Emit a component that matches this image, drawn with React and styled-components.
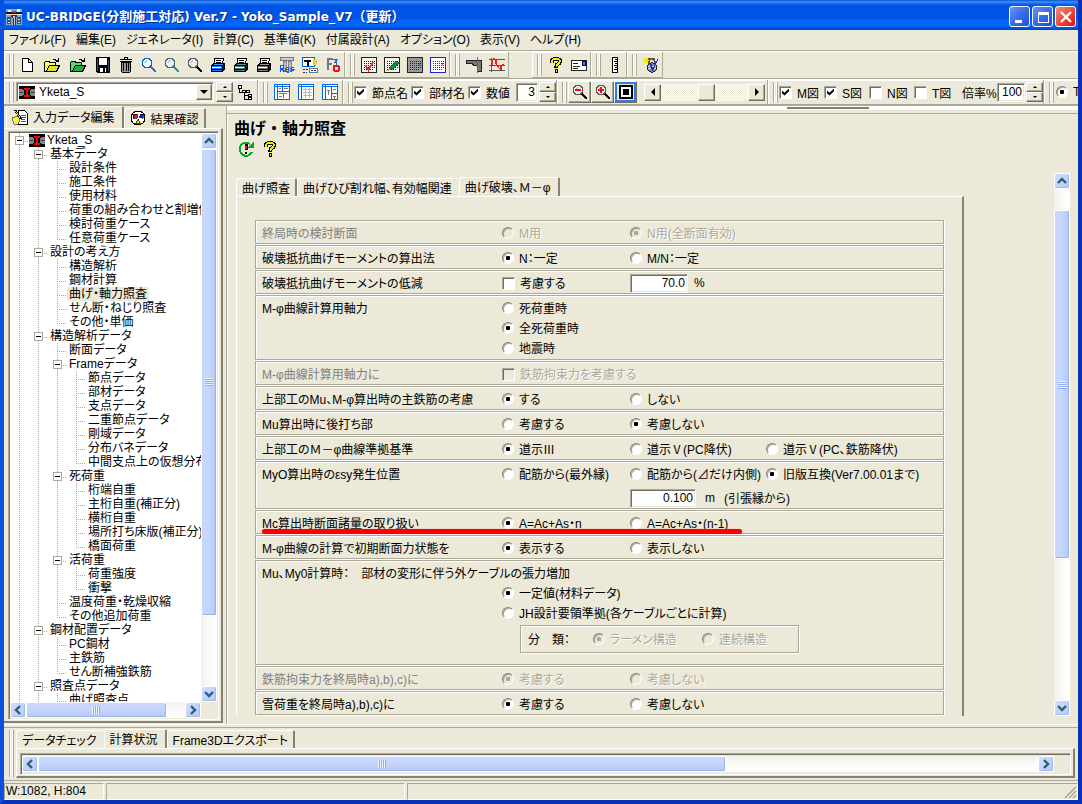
import React from 'react';
import styled, { createGlobalStyle, css } from 'styled-components';

const face = '#ece9d8';
const shade = '#aca899';
const dark = '#716f64';
const edge = '#85826f';

const GlobalStyle = createGlobalStyle`
  *, *::before {
    box-sizing: border-box;
  }
  body {
    margin: 0;
    overflow: hidden;
  }
  body, button, input, select {
    font-family: 'Liberation Sans', 'Noto Sans CJK JP', sans-serif;
    font-size: 12px;
    font-feature-settings: 'palt';
    color: #000;
  }
`;

/* ---------- icons ---------- */

const lens = (ring, handle, glass = '#fff') => (
  <>
    <path d="M9 9l6 6" stroke={handle} strokeWidth="2.4" />
    <circle cx="6" cy="6" r="4.6" fill={glass} stroke={ring} strokeWidth="1.6" />
    <path d="M3 5h1v-1h1v-1h1" fill="none" stroke="#9cf" />
  </>
);

const folder = (fill, front) => (
  <>
    <path d="M.5 14V5.5l1-1H5l1 1h5.500V8.500H5.500L2 14.500z" fill={fill} stroke="#000" />
    <path d="M2 14.5L5.5 8.5H15.5L12.5 14.5z" fill={front} stroke="#000" />
    <path d="M9 2.5h2l1 1h2M14.5 1v4M12 4.5h3" fill="none" stroke="#000" />
  </>
);

const printer = (body, top) => (
  <>
    <path d="M4.5 6V1.5H13.5L12.5 6" fill="#fff" stroke="#000" />
    <path d="M6 3.5h5M6 5.5h5" stroke="#000" />
    <path d="M1.5 8.5L4 6.5H14.5L12.5 8.5z" fill={top} stroke="#000" />
    <path d="M1.5 8.5H12.5V14.5H1.5z" fill={body} stroke="#000" />
    <path d="M12.5 8.5L14.5 6.5V12L12.5 14.5z" fill="#222" stroke="#000" />
    <path d="M2 10.5h9" stroke="#fff" />
    <path d="M2 12.5h10" stroke="#000" />
  </>
);

const gridSheet = (stroke, fill, dots) => (
  <>
    <rect x="0.5" y="0.5" width="15" height="15" rx="1" fill={fill} stroke={stroke} />
    <path
      d="M3 4.500h11M3 6.500h11M3 8.500h11M3 10.500h11M3 12.500h9"
      stroke={dots}
      strokeDasharray="1 1"
    />
  </>
);

const ICONS = {
  app: (
    <>
      <rect width="16" height="16" fill="#7fa6d8" />
      <path d="M0 3h16v2H0z" fill="#111" />
      <path d="M0 5h16v1H0z" fill="#e8e8e8" />
      <path d="M2 1h3v2H2zM11 0h3v3h-3z" fill="#fff" />
      <path d="M5 6h6l-2 3v7H7V9z" fill="#c9c9c9" stroke="#333" />
      <path d="M1 8h4v7H1zM11 8h4v7h-4z" fill="#4a4f60" />
      <path d="M6 2h4v2H6z" fill="#d22" />
      <path d="M2 10h2M12 10h2M2 13h2M12 13h2" stroke="#ddd" />
    </>
  ),
  beam: (
    <>
      <rect width="16" height="13" fill="#000" />
      <path d="M0 3h4l1 2v3l-1 2H0zM16 3h-4l-1 2v3l1 2h4z" fill="#848484" />
      <path d="M0 6.500h4M12 6.500h4" stroke="#444" />
      <path d="M5 2h6v2H9v5h2v2H5V9h2V4H5z" fill="#f00" />
    </>
  ),
  page: <path d="M2.500 1.500h6l4 4v9h-10zM8.500 1.500v4h4" fill="#fff" stroke="#000" />,
  open: folder('#ff6', '#dd3'),
  openGreen: folder('#5d6', '#2a4'),
  save: (
    <>
      <path d="M1 0h14v16H2l-1-1z" fill="#000" />
      <path d="M4 1h8v7H4zM5 11h6v4H5z" fill="#fff" />
      <path d="M8 11h2v4H8z" fill="#000" />
      <path d="M2.500 2v12M13.500 3v11" stroke="#447" />
    </>
  ),
  trash: (
    <>
      <path d="M6.500 2V.5H9.500V2M2 2.500H14M2 4.500H14" fill="none" stroke="#000" />
      <path d="M3.500 5H12.500V14.500L11.500 15.500H4.500L3.500 14.500z" fill="#999" stroke="#000" />
      <path d="M5.500 6v8M8 6v8M10.500 6v8" stroke="#000" />
    </>
  ),
  findBlue: lens('#06c', '#27e'),
  find: lens('#466', '#488', '#eef'),
  findBlack: lens('#555', '#000', '#eee'),
  print: printer('#17f', '#49f'),
  printTeal: printer('#477', '#688'),
  printGray: printer('#777', '#999'),
  res: (
    <>
      <path d="M1.500 .5h13v3h-13z" fill="#ccc" stroke="#777" />
      <path d="M4.500 4h3v9h-3zM9.500 4h3v9h-3z" fill="#bbb" stroke="#888" />
      <path
        d="M1.500 15V8.500H4q2 1.500 0 3H1.500l4 3.500M6.500 12.500h3q0-2-1.500-2T6.500 13q0 2 3 2M15 10.500q-3-.5-3 1t2.500 1-3 2"
        fill="none"
        stroke="#15f"
        strokeWidth="1.300"
      />
    </>
  ),
  layout: (
    <>
      <rect x="0.5" y="0.5" width="12" height="9" fill="#fff" stroke="#06c" />
      <path d="M2 3h7v2H7v4H5V5H2z" fill="#000" />
      <path d="M12 2l3 2-2 5-2-3z" fill="#fd0" stroke="#c90" strokeWidth="0.500" />
      <rect x="7.500" y="11.500" width="8" height="4" fill="#fff" stroke="#777" />
      <path d="M1 12.500h5M1 15h4M9 13.500h5" stroke="#229" strokeDasharray="2 1" />
    </>
  ),
  f3d: (
    <>
      <path d="M3 13V2H8M3 6.500h4" fill="none" stroke="#777" strokeWidth="2" />
      <path d="M8 2.500h4l-2 3q3 0 1 3" fill="none" stroke="#26d" strokeWidth="1.500" />
      <ellipse cx="11.500" cy="11.500" rx="2.800" ry="3" fill="none" stroke="#e11" strokeWidth="2" />
      <path d="M8 8v5" stroke="#e11" />
    </>
  ),
  calcRed: (
    <>
      {gridSheet('#222', '#f6f6f0', '#222')}
      <path d="M5 9l2.500 4L12 5" fill="none" stroke="#e22" strokeWidth="1.800" />
    </>
  ),
  calcGreen: (
    <>
      {gridSheet('#222', '#f6f6f0', '#222')}
      <path d="M6 12l1-3 5-5 3 2-6 6z" fill="#093" stroke="#042" strokeWidth="0.700" />
      <path d="M4 13l2-1" stroke="#f80" strokeWidth="2" />
    </>
  ),
  calcGray: (
    <>
      {gridSheet('#222', '#999', '#222')}
      <path d="M12 6h1v2h-1z" fill="#e22" />
    </>
  ),
  calcBlue: (
    <>
      {gridSheet('#22d', '#fff', '#22d')}
      <path d="M12 6h1v2h-1z" fill="#e22" />
    </>
  ),
  girder: (
    <>
      <path d="M0 3.500h15.500v11h-4V8.500H8L6 6.500H0z" fill="#777" stroke="#222" />
      <path d="M11.500 0v16" stroke="#f22" />
    </>
  ),
  wave: (
    <>
      <path d="M2.500 1v14M0 2.500h16M0 8.500h16M0 13.500h16" stroke="#555" />
      <path d="M3 8V3l2-2 2 2v4l3 4 1 1h1V9l3-2" fill="none" stroke="#e22" strokeWidth="1.200" />
    </>
  ),
  help: (
    <>
      <path d="M4 6V4q0-2 4-2t4 2q0 2-2 3T8.500 11" fill="none" stroke="#000" strokeWidth="4" />
      <path d="M4 5.500V4q0-2 4-2t4 2q0 2-2 3T8.500 10.500" fill="none" stroke="#ee0" strokeWidth="1.800" />
      <circle cx="8.500" cy="14" r="1.500" fill="#ee0" stroke="#000" />
    </>
  ),
  card: (
    <>
      <rect x="0.500" y="3.500" width="15" height="10" fill="#fff" stroke="#222" />
      <path d="M2 6.500h5M2 9.500h7M2 11.500h5" stroke="#222" />
      <path d="M11.500 4.500h3v4h-3z" fill="#48f" stroke="#006" />
    </>
  ),
  ruler: (
    <>
      <path d="M5.500 0.500h5v15h-5z" fill="#fff" stroke="#000" />
      <path d="M8 2.500h2M7 4.500h3M8 6.500h2M7 8.500h3M8 10.500h2M7 12.500h3" stroke="#000" />
    </>
  ),
  lock: (
    <>
      <path d="M5.500 8V4q0-2.500 3-2.500T11.500 4v4" fill="none" stroke="#555" strokeWidth="2" />
      <circle cx="9" cy="10.500" r="4.700" fill="#888" stroke="#222" />
      <path d="M5 9.500h8M5 11.500h8" stroke="#ddd" />
      <path d="M8 7l1.500 6L15 2M8 9l2 5" fill="none" stroke="#12c" strokeWidth="1.300" />
      <path d="M3.500 1v6M0 3.500h6M1 1.500l4 4M5 1.500l-4 4" stroke="#ee0" />
    </>
  ),
  tree: (
    <>
      <path
        d="M1.500 1.500h3v3h-3zM5.500 6.500h3v2h-3zM9.500 6.500h3v2h-3zM11.500 10.500h3v2h-3zM11.500 13.500h3v2h-3z"
        fill="#fff"
        stroke="#000"
      />
      <path d="M2.500 5v3h3M7.500 9v6h4M8 11.500h4" fill="none" stroke="#000" />
    </>
  ),
  pane1: (
    <>
      <path d="M.5 .5h15v15H.5z" fill="#fff" stroke="#06e" />
      <path d="M3.500 1v15M8.500 1v6M3 7.500h13M1 2.500h15" stroke="#06e" />
      <path d="M5 4.500h2M10 4.500h4M5 9.500h8M5 12.500h3M9.500 10v4" stroke="#777" />
    </>
  ),
  pane2: (
    <>
      <path d="M.5 .5h15v15H.5z" fill="#fff" stroke="#06e" />
      <path d="M3.500 1v15M1 2.500h15" stroke="#06e" />
      <path d="M5 5.500h9M5 8.500h9M5 11.500h9M7.500 4v10M11.500 4v10" stroke="#bbb" />
    </>
  ),
  pane3: (
    <>
      <path d="M.5 .5h15v15H.5z" fill="#fff" stroke="#06e" />
      <path d="M3.500 1v15M1 2.500h15M9.500 3v12M10 9.500h5" stroke="#06e" />
      <path d="M5 6.500h3M6.500 7v4M11 5.500h3M11 12.500h3M12.500 12v3" stroke="#777" />
    </>
  ),
  zoomOut: (
    <>
      {lens('#555', '#000', '#eee')}
      <path d="M3 6h6" stroke="#e11" strokeWidth="2" />
    </>
  ),
  zoomIn: (
    <>
      {lens('#555', '#000', '#eee')}
      <path d="M3 6h6M6 3v6" stroke="#e11" strokeWidth="2" />
    </>
  ),
  fit: (
    <>
      <path d="M2 2h12v12H2z" fill="#fff" stroke="#000" strokeWidth="2" />
      <path d="M5 5h6v6H5z" fill="#000" />
    </>
  ),
  edit: (
    <>
      <path d="M6.500 1.500h6l3 3v11h-9z" fill="#fff" stroke="#000" />
      <path d="M9 6.500h5M9 8.500h5M9 10.500h4M9 12.500h5" stroke="#555" />
      <path d="M0 9l5-2 3 3-2 5H2z" fill="#fe4" stroke="#555" strokeWidth="0.800" />
      <path d="M3 1l6 9" stroke="#000" strokeWidth="2.400" />
      <path d="M3.500 2l5 7.500" stroke="#fd0" strokeWidth="1" />
    </>
  ),
  result: (
    <>
      <circle cx="8" cy="8" r="7" fill="#fff" stroke="#000" />
      <path d="M3 4h4v4H3z" fill="#e11" stroke="#000" strokeWidth="0.700" />
      <circle cx="11.500" cy="6" r="2" fill="#22d" stroke="#000" strokeWidth="0.700" />
      <path d="M8 8.500l3 4.500H5z" fill="#fd0" stroke="#000" strokeWidth="0.700" />
    </>
  ),
  refresh: (
    <>
      <path d="M14 11A6.500 6.500 0 1 1 12 3" fill="none" stroke="#0a2" strokeWidth="2" />
      <path d="M15.500 1v6H10z" fill="#0a2" />
      <path d="M8 3v6" stroke="#000" strokeWidth="3" />
      <path d="M8 5v3" stroke="#c22" strokeWidth="2" />
      <path d="M7 11h2v2H7z" fill="#000" />
    </>
  ),
};

const Svg = styled.svg`
  display: block;
  flex: none;
  width: 16px;
  height: ${props => props.$height || 16}px;
`;

const Icon = ({ name, height = 16 }) => (
  <Svg viewBox={`0 0 16 ${height}`} $height={height} shapeRendering="crispEdges" aria-hidden="true">
    {ICONS[name]}
  </Svg>
);

/* ---------- shared parts ---------- */

const raised = css`
  border: 1px solid;
  border-color: #fff ${dark} ${dark} #fff;
  box-shadow: inset -1px -1px 0 ${shade};
`;

const sunken = css`
  padding: 1px;
  border: 1px solid;
  border-color: ${shade} #fff #fff ${shade};
  box-shadow: inset 1px 1px 0 ${dark}, inset -1px -1px 0 ${face};
`;

const Radio = styled.input.attrs({ type: 'radio' })`
  appearance: none;
  flex: none;
  width: 12px;
  height: 12px;
  margin: 0;
  border: 1px solid;
  border-color: #86837a #fff #fff #86837a;
  border-radius: 50%;
  background: #fff;
  box-shadow: inset 1px 1px 0 #aaa79b;

  &:checked {
    background: radial-gradient(circle at 5px 5px, #000 0 2px, #fff 2.500px);
  }
  &:disabled {
    background: ${face};
  }
  &:disabled:checked {
    background: radial-gradient(circle at 5px 5px, #aca899 0 2px, ${face} 2.500px);
  }
`;

const Check = styled.input.attrs({ type: 'checkbox' })`
  appearance: none;
  flex: none;
  display: grid;
  place-items: center;
  width: 13px;
  height: 13px;
  margin: 0;
  border: 1px solid;
  border-color: ${shade} #fff #fff ${shade};
  background: #fff;
  box-shadow: inset 1px 1px 0 ${dark};

  &:checked::before {
    content: '';
    width: 7px;
    height: 7px;
    background: #000;
    clip-path: polygon(0 28%, 36% 60%, 100% 0, 100% 40%, 36% 100%, 0 68%);
  }
  &:disabled {
    background: ${face};
  }
`;

const Option = styled.label`
  grid-column: ${props => props.$col || 'auto'};
  display: flex;
  flex: none;
  align-items: center;
  gap: 5px;
  white-space: nowrap;
  ${props =>
    props.$off &&
    css`
      color: ${shade};
      text-shadow: 1px 1px 0 #fff;
    `}
`;

const NumberField = styled.input.attrs({ type: 'text' })`
  ${sunken}
  width: ${props => props.$width}px;
  height: 19px;
  margin: 0;
  padding: 0 2px 1px;
  background: #fff;
  text-align: right;
  outline: none;
`;

/* XP style scroll bar */
const Bar = styled.div`
  display: flex;
  flex: none;
  flex-direction: ${props => (props.$across ? 'row' : 'column')};
  ${props => (props.$across ? 'height: 16px;' : 'width: 16px;')}
  background: linear-gradient(${props => (props.$across ? '180deg' : '90deg')}, #f2f1ec, #fdfdfa 70%, #fff);
`;

const BarButton = styled.button`
  display: flex;
  flex: none;
  align-items: center;
  justify-content: center;
  width: 16px;
  height: 16px;
  padding: 0;
  border: 1px solid #fff;
  border-radius: 2px;
  background: linear-gradient(135deg, #d0defe, #b4c9f8);
  box-shadow: inset -1px -1px 0 #a4bbec;
`;

const Thumb = styled.div`
  display: flex;
  align-items: center;
  justify-content: center;
  flex: ${props => props.$size} 1 0;
  border: 1px solid #fff;
  border-radius: 2px;
  background: linear-gradient(${props => (props.$across ? '180deg' : '90deg')}, #c8d7fe 40%, #b7cbf8 90%);
  box-shadow: inset -1px -1px 0 #98b4e6;
`;

const Space = styled.div`
  flex: ${props => props.$size} 1 0;
`;

const Grip = styled.span`
  width: 8px;
  height: 8px;
  background: repeating-linear-gradient(
    ${props => (props.$across ? '90deg' : '180deg')},
    #eef4fe 0 1px,
    #8cb0f8 1px 2px
  );
`;

const CHEVRONS = {
  up: 'M4 10l4-4 4 4',
  down: 'M4 6l4 4 4-4',
  left: 'M10 4l-4 4 4 4',
  right: 'M6 4l4 4-4 4',
};

const Chevron = ({ to }) => (
  <Svg viewBox="0 0 16 16" aria-hidden="true">
    <path d={CHEVRONS[to]} fill="none" stroke="#2a6172" strokeWidth="2.400" />
  </Svg>
);

const ScrollBar = ({ across, before = 0, size, after }) => (
  <Bar $across={across}>
    <BarButton tabIndex={-1} aria-label={across ? 'Left' : 'Up'}>
      <Chevron to={across ? 'left' : 'up'} />
    </BarButton>
    <Space $size={before} />
    <Thumb $size={size} $across={across}>
      <Grip $across={across} />
    </Thumb>
    <Space $size={after} />
    <BarButton tabIndex={-1} aria-label={across ? 'Right' : 'Down'}>
      <Chevron to={across ? 'right' : 'down'} />
    </BarButton>
  </Bar>
);

/* ---------- window frame ---------- */

const Window = styled.div`
  display: flex;
  flex-direction: column;
  height: 100vh;
  border: solid #0a4fe0;
  border-width: 0 4px 4px;
  border-color: #0a4fe0 #0831b8 #0831b8 #0a4fe0;
  background: ${face};
  overflow: hidden;
`;

const TitleBar = styled.header`
  display: flex;
  align-items: center;
  flex: none;
  height: 30px;
  margin: 0 -4px;
  padding: 3px 6px 0;
  background: linear-gradient(
    #0a50d0 0,
    #3f94fa 2px,
    #0a62ea 4px,
    #0054e4 6px,
    #0055e6 19px,
    #0066fb 20px,
    #0066fb 26px,
    #0040cc 30px
  );
`;

const Title = styled.h1`
  flex: 1;
  margin: 0 0 0 4px;
  font: bold 12px/20px 'DejaVu Sans', 'Noto Sans CJK JP', sans-serif;
  color: #fff;
  text-shadow: 1px 1px 0 #0a2a80;
  white-space: nowrap;
`;

const TitleKanji = styled.span`
  font-size: 13px;
`;

const CaptionButton = styled.button`
  display: flex;
  align-items: center;
  justify-content: center;
  width: 21px;
  height: 21px;
  margin-left: 2px;
  padding: 0;
  border: 1px solid #fff;
  border-radius: 3px;
  background: ${props =>
    props.$close
      ? 'linear-gradient(135deg, #f0907a, #e8503a 50%, #e01010)'
      : 'linear-gradient(135deg, #6a94f0, #3a6cea 50%, #1a50d8)'};
`;

const MenuBar = styled.nav`
  display: flex;
  flex: none;
  gap: 10px;
  height: 20px;
  padding-left: 5px;
`;

const MenuButton = styled.button`
  padding: 0 0 3px;
  border: 0;
  background: none;
  white-space: nowrap;
`;

const ToolBar = styled.div`
  display: flex;
  flex: none;
  height: ${props => props.$height}px;
  border-top: 1px solid ${shade};
  box-shadow: inset 0 1px 0 #fff;
  overflow: hidden;
`;

const ToolGroup = styled.div`
  display: flex;
  align-items: center;
  flex: none;
  margin: 1px 0 0 ${props => props.$before || 0}px;
  padding-left: 5px;
  border-right: 1px solid ${shade};
  border-bottom: 1px solid ${shade};
  box-shadow: inset 1px 1px 0 #fff;

  &::before {
    content: '';
    align-self: stretch;
    width: 5px;
    margin: 2px ${props => props.$after || 2}px 1px 0;
    border: solid ${shade};
    border-width: 0 1px;
    box-shadow: inset 1px 0 0 #fff, inset -1px 0 0 #fff;
  }
`;

const ToolButton = styled.button`
  display: flex;
  align-items: center;
  justify-content: center;
  flex: none;
  width: ${props => props.$width || 23}px;
  height: 22px;
  padding: 0;
  border: 0;
  background: none;
  ${props => props.$raised && raised}
  ${props => props.$active && 'outline: 2px solid #2a80e8; outline-offset: -3px;'}
`;

const Combo = styled.div`
  ${sunken}
  display: flex;
  align-items: center;
  width: 198px;
  height: 20px;
  padding-left: 2px;
  background: #fff;
`;

const ComboSelect = styled.select`
  appearance: none;
  flex: 1;
  min-width: 0;
  height: 16px;
  padding: 0 0 0 4px;
  border: 0;
  background: none;
  outline: none;
`;

const ComboArrow = styled.span`
  ${raised}
  display: flex;
  align-items: center;
  justify-content: center;
  flex: none;
  width: 16px;
  height: 16px;
  background: ${face};
`;

const Spin = styled.div`
  display: flex;
  flex-direction: column;
  width: 17px;
  margin-left: ${props => props.$before || 1}px;
`;

const SpinButton = styled.button`
  ${raised}
  display: flex;
  align-items: center;
  justify-content: center;
  height: 10px;
  padding: 0;
  background: ${face};
`;

const Arrow = styled.span`
  border: ${props => props.$size || 2}px solid transparent;
  ${props => props.$to === 'up' && 'border-top: 0; border-bottom-color: #000;'}
  ${props => props.$to === 'down' && 'border-bottom: 0; border-top-color: #000;'}
  ${props => props.$to === 'left' && 'border-left: 0; border-right-color: #000;'}
  ${props => props.$to === 'right' && 'border-right: 0; border-left-color: #000;'}
`;

const Spinner = ({ before }) => (
  <Spin $before={before}>
    <SpinButton aria-label="+">
      <Arrow $to="up" />
    </SpinButton>
    <SpinButton aria-label="-">
      <Arrow $to="down" />
    </SpinButton>
  </Spin>
);

const ToolCheck = styled(Option)`
  width: ${props => props.$width}px;
`;

const Slider = styled.div`
  display: flex;
  width: 121px;
  height: 17px;
  margin: 0 2px 0 7px;
  background: repeating-conic-gradient(#fff 0 25%, ${face} 0 50%) 0 0 / 2px 2px;
`;

const SliderButton = styled(ComboArrow)`
  width: 17px;
  height: 17px;
`;

/* ---------- tabs ---------- */

const Tabs = styled.div`
  display: flex;
  align-items: flex-end;
  flex: none;
  padding-left: ${props => props.$left || 0}px;
`;

const Tab = styled.button`
  display: flex;
  align-items: center;
  gap: 5px;
  height: ${props => (props.$active ? props.$height + 2 : props.$height)}px;
  padding: 0 5px ${props => (props.$active ? 3 : 1)}px;
  border: solid;
  border-width: 1px 2px 0 1px;
  border-color: #fff ${props => (props.$flat ? face : edge)} #fff #fff;
  border-radius: 3px 2px 0 0;
  background: ${face};
  white-space: nowrap;
  ${props => props.$active && 'margin-bottom: -1px; padding-right: 7px;'}
`;

/* ---------- side bar ---------- */

const Body = styled.div`
  display: flex;
  flex: 1;
  min-height: 0;
  border-top: 1px solid ${shade};
`;

const SideBar = styled.aside`
  display: flex;
  flex-direction: column;
  flex: none;
  width: 219px;
  padding-bottom: 1px;
`;

const SidePage = styled.div`
  flex: 1;
  display: flex;
  min-height: 0;
  padding: 2px 2px 1px 4px;
  border: solid;
  border-width: 1px 2px 2px 0;
  border-color: #fff ${edge} ${edge} #fff;
`;

const TreeFrame = styled.div`
  ${sunken}
  flex: 1;
  display: flex;
  min-width: 0;
  background: ${face};
`;

const TreeColumn = styled.div`
  flex: 1;
  display: flex;
  flex-direction: column;
  min-width: 0;
`;

const BarColumn = styled.div`
  display: flex;
  padding-bottom: 16px;
`;

const Tree = styled.ul`
  flex: 1;
  min-height: 0;
  margin: 0;
  padding: 0;
  background: #fff;
  list-style: none;
  overflow: hidden;
`;

const TreeRow = styled.li`
  display: flex;
  align-items: center;
  height: 14px;
  line-height: 14px;
  white-space: nowrap;
`;

const Guide = styled.span`
  display: flex;
  align-items: center;
  justify-content: center;
  flex: none;
  width: 19px;
  height: 14px;
  background-repeat: no-repeat;
  background-image: repeating-linear-gradient(${shade} 0 1px, transparent 1px 2px),
    repeating-linear-gradient(90deg, ${shade} 0 1px, transparent 1px 2px);
  background-position: 9px 0, 9px 8px;
  background-size: 1px ${props => props.$down}px, ${props => (props.$across ? 10 : 0)}px 1px;
`;

const Box = styled.span`
  width: 9px;
  height: 9px;
  margin-top: 1px;
  border: 1px solid ${shade};
  background: linear-gradient(#000, #000) center / 5px 1px no-repeat #fff;
`;

const NodeName = styled.span`
  padding: 0 2px;
  background: ${props => (props.$selected ? face : 'none')};
`;

const NODES = [
  [0, 'Yketa_S'],
  [1, '基本データ'],
  [2, '設計条件'],
  [2, '施工条件'],
  [2, '使用材料'],
  [2, '荷重の組み合わせと割増係数'],
  [2, '検討荷重ケース'],
  [2, '任意荷重ケース'],
  [1, '設計の考え方'],
  [2, '構造解析'],
  [2, '鋼材計算'],
  [2, '曲げ・軸力照査'],
  [2, 'せん断・ねじり照査'],
  [2, 'その他・単価'],
  [1, '構造解析データ'],
  [2, '断面データ'],
  [2, 'Frameデータ'],
  [3, '節点データ'],
  [3, '部材データ'],
  [3, '支点データ'],
  [3, '二重節点データ'],
  [3, '剛域データ'],
  [3, '分布バネデータ'],
  [3, '中間支点上の仮想分布'],
  [2, '死荷重'],
  [3, '桁端自重'],
  [3, '主桁自重(補正分)'],
  [3, '横桁自重'],
  [3, '場所打ち床版(補正分)'],
  [3, '橋面荷重'],
  [2, '活荷重'],
  [3, '荷重強度'],
  [3, '衝撃'],
  [2, '温度荷重・乾燥収縮'],
  [2, 'その他追加荷重'],
  [1, '鋼材配置データ'],
  [2, 'PC鋼材'],
  [2, '主鉄筋'],
  [2, 'せん断補強鉄筋'],
  [1, '照査点データ'],
  [2, '曲げ照査点'],
];

// true while a later row still belongs to the same branch at this level
const continues = (index, level) => {
  for (let i = index + 1; i < NODES.length; i++) {
    if (NODES[i][0] < level) return false;
    if (NODES[i][0] === level) return true;
  }
  return level < 3;
};

const TreeNode = ({ index, depth, name }) => {
  const isParent = index + 1 < NODES.length && NODES[index + 1][0] > depth;
  return (
    <TreeRow>
      {Array.from({ length: depth }, (_, level) => (
        <Guide key={level} $down={level === 0 || continues(index, level) ? 14 : 0} />
      ))}
      <Guide $down={continues(index, depth) ? 14 : 8} $across>
        {isParent && <Box />}
      </Guide>
      {depth === 0 && <Icon name="beam" height={13} />}
      <NodeName $selected={name === '曲げ・軸力照査'}>{name}</NodeName>
    </TreeRow>
  );
};

/* ---------- main pane ---------- */

const Main = styled.main`
  flex: 1;
  display: flex;
  flex-direction: column;
  min-width: 0;
  margin-left: 3px;
  padding-bottom: 8px;
  border-left: 1px solid ${shade};
  box-shadow: inset 1px 0 0 #fff;
`;

const Strip = styled.div`
  display: flex;
  justify-content: center;
  flex: none;
  height: 8px;
  padding-left: 350px;
  border-bottom: 1px solid ${shade};
  background: linear-gradient(#fff 4px, ${face} 4px);
`;

const StripHandle = styled.span`
  width: 82px;
  height: 3px;
  border-bottom: 2px solid ${edge};
`;

const Heading = styled.h2`
  margin: 5px 0 2px 7px;
  font-size: 16px;
  line-height: 20px;
  font-feature-settings: normal;
`;

const Actions = styled.div`
  display: flex;
  gap: 8px;
  margin: 0 0 16px 11px;
`;

const ActionButton = styled.button`
  width: 16px;
  height: 16px;
  padding: 0;
  border: 0;
  background: none;
`;

const ScrollRow = styled.div`
  flex: 1;
  display: flex;
  min-height: 0;
  padding-right: 8px;
`;

const Sheet = styled.div`
  flex: 1;
  display: flex;
  flex-direction: column;
  min-width: 0;
  padding: 4px 90px 0 9px;
`;

const Page = styled.div`
  flex: 1;
  display: flex;
  flex-direction: column;
  gap: 1px;
  min-height: 0;
  padding: 23px 18px 0;
  border: solid;
  border-width: 1px 2px 0 1px;
  border-color: #fff ${edge} #fff #fff;
  overflow: hidden;
`;

const Row = styled.div`
  position: relative;
  display: grid;
  flex: none;
  grid-template-columns: 240px 128px 136px 1fr;
  grid-auto-rows: 20px;
  row-gap: ${props => props.$gap || 0}px;
  align-items: center;
  padding: 2px 6px ${props => props.$bottom || 0}px;
  border: 1px solid ${shade};
  box-shadow: inset 1px 1px 0 #fff, 1px 1px 0 #fff;
`;

const RowLabel = styled.span`
  grid-column: ${props => (props.$wide ? '1 / -1' : '1')};
  padding-bottom: 2px;
  color: ${props => (props.$off ? '#808080' : '#000')};
  white-space: nowrap;
`;

const OptionText = styled.span`
  padding-bottom: 2px;
`;

const Cell = styled.div`
  grid-column: 3 / -1;
  display: flex;
  align-items: center;
  gap: ${props => props.$gap}px;
  white-space: nowrap;
`;

const SubBox = styled.div`
  grid-column: 2 / -1;
  display: flex;
  align-items: center;
  justify-self: start;
  align-self: start;
  width: 279px;
  height: 28px;
  margin: 2px 0 0 18px;
  padding-left: 7px;
  border: 1px solid ${shade};
  box-shadow: inset 1px 1px 0 #fff, 1px 1px 0 #fff;

  ${Option} {
    width: 109px;
  }
`;

const SubLabel = styled.span`
  flex: none;
  width: 65px;
  padding-bottom: 2px;
`;

const Underline = styled.span`
  position: absolute;
  top: 18px;
  left: 6px;
  width: 480px;
  height: 5px;
  border-radius: 3px;
  background: #f00;
  box-shadow: 0 0 1px #f66;
`;

const Choice = ({ group, col, on, off, children }) => (
  <Option $col={col} $off={off}>
    <Radio name={group} defaultChecked={on} disabled={off} />
    <OptionText>{children}</OptionText>
  </Option>
);

/* ---------- bottom dock ---------- */

const Dock = styled.section`
  display: flex;
  flex: none;
  height: 57px;
  padding: 5px 3px 2px 5px;
  border: solid ${shade};
  border-width: 0 0 1px;
  box-shadow: inset 0 1px 0 #fff, inset 0 3px 0 ${face}, inset 0 4px 0 ${shade};

  &::before {
    content: '';
    width: 5px;
    margin: 1px 2px 1px 0;
    border: solid ${shade};
    border-width: 0 1px;
    box-shadow: inset 1px 0 0 #fff, inset -1px 0 0 #fff;
  }
`;

const DockPanel = styled.div`
  flex: 1;
  display: flex;
  flex-direction: column;
  min-width: 0;
`;

const DockPage = styled.div`
  flex: 1;
  display: flex;
  padding: 4px 2px 1px 3px;
  border: solid;
  border-width: 1px 2px 2px 1px;
  border-color: #fff ${edge} ${edge} #fff;
`;

const DockFrame = styled.div`
  ${sunken}
  flex: 1;
  display: flex;
  flex-direction: column;
  justify-content: center;
  padding-right: 16px;
  min-width: 0;
`;

const StatusBar = styled.footer`
  display: flex;
  flex: none;
  gap: 2px;
  height: 19px;
  padding-top: 2px;
`;

const StatusCell = styled.div`
  flex: ${props => (props.$width ? `0 0 ${props.$width}px` : '1')};
  display: flex;
  align-items: flex-end;
  justify-content: space-between;
  padding-left: 1px;
  border: 1px solid;
  border-color: ${shade} #fff #fff ${shade};
  line-height: 15px;
  white-space: nowrap;
`;

const MENUS = [
  'ファイル(F)',
  '編集(E)',
  'ジェネレータ(I)',
  '計算(C)',
  '基準値(K)',
  '付属設計(A)',
  'オプション(O)',
  '表示(V)',
  'ヘルプ(H)',
];

const TOOLS = [
  { icons: ['page', 'open', 'openGreen', 'save', 'trash', 'findBlue', 'find', 'findBlack', 'print', 'printTeal', 'printGray', 'res', 'layout', 'f3d'] },
  { icons: ['calcRed', 'calcGreen', 'calcGray', 'calcBlue'] },
  { icons: ['girder', 'wave'] },
  { icons: ['help', 'card'], before: 23 },
  { icons: ['ruler'] },
  { icons: ['lock'] },
];

const App = () => (
  <>
    <GlobalStyle />
    <Window>
      <TitleBar>
        <Icon name="app" />
        <Title>
          UC-BRIDGE(<TitleKanji>分割施工対応</TitleKanji>) Ver.7 - Yoko_Sample_V7<TitleKanji>（更新）</TitleKanji>
        </Title>
        <CaptionButton aria-label="Minimize">
          <Svg viewBox="0 0 16 16">
            <path d="M3 11h7v3H3z" fill="#fff" />
          </Svg>
        </CaptionButton>
        <CaptionButton aria-label="Maximize">
          <Svg viewBox="0 0 16 16">
            <path d="M3 3h11v11H3zM4 6v7h9V6z" fill="#fff" fillRule="evenodd" />
          </Svg>
        </CaptionButton>
        <CaptionButton $close aria-label="Close">
          <Svg viewBox="0 0 16 16">
            <path d="M3 3l10 10M13 3L3 13" stroke="#fff" strokeWidth="2.400" />
          </Svg>
        </CaptionButton>
      </TitleBar>

      <MenuBar>
        {MENUS.map(menu => (
          <MenuButton key={menu}>{menu}</MenuButton>
        ))}
      </MenuBar>

      <ToolBar $height={28}>
        {TOOLS.map((group, i) => (
          <ToolGroup key={i} $before={group.before}>
            {group.icons.map(name => (
              <ToolButton key={name} $width={name.startsWith('open') ? 26 : 23} aria-label={name}>
                <Icon name={name} />
              </ToolButton>
            ))}
          </ToolGroup>
        ))}
      </ToolBar>

      <ToolBar $height={27}>
        <ToolGroup>
          <Combo>
            <Icon name="beam" height={13} />
            <ComboSelect aria-label="Yketa_S">
              <option>Yketa_S</option>
            </ComboSelect>
            <ComboArrow>
              <Arrow $to="down" $size={4} />
            </ComboArrow>
          </Combo>
          <Spinner before={2} />
          <ToolButton $width={24} aria-label="tree">
            <Icon name="tree" />
          </ToolButton>
        </ToolGroup>
        <ToolGroup>
          <ToolButton $width={24} aria-label="pane1">
            <Icon name="pane1" />
          </ToolButton>
          <ToolButton $width={24} aria-label="pane2">
            <Icon name="pane2" />
          </ToolButton>
          <ToolButton $width={24} aria-label="pane3">
            <Icon name="pane3" />
          </ToolButton>
        </ToolGroup>
        <ToolGroup $after={1}>
          <ToolCheck $width={57}>
            <Check defaultChecked />
            節点名
          </ToolCheck>
          <ToolCheck $width={57}>
            <Check defaultChecked />
            部材名
          </ToolCheck>
          <ToolCheck $width={48}>
            <Check defaultChecked />
            数値
          </ToolCheck>
          <NumberField $width={22} defaultValue="3" aria-label="数値" />
          <Spinner />
        </ToolGroup>
        <ToolGroup $after={1}>
          <ToolButton $raised aria-label="zoom out">
            <Icon name="zoomOut" />
          </ToolButton>
          <ToolButton $raised aria-label="zoom in">
            <Icon name="zoomIn" />
          </ToolButton>
          <ToolButton $raised $active aria-label="fit">
            <Icon name="fit" />
          </ToolButton>
          <Slider>
            <SliderButton>
              <Arrow $to="left" $size={4} />
            </SliderButton>
            <Space $size={36} />
            <SliderButton />
            <Space $size={33} />
            <SliderButton>
              <Arrow $to="right" $size={4} />
            </SliderButton>
          </Slider>
        </ToolGroup>
        <ToolGroup $after={1}>
          <ToolCheck $width={45}>
            <Check defaultChecked />
            M図
          </ToolCheck>
          <ToolCheck $width={45}>
            <Check defaultChecked />
            S図
          </ToolCheck>
          <ToolCheck $width={45}>
            <Check />
            N図
          </ToolCheck>
          <ToolCheck $width={48}>
            <Check />
            T図
          </ToolCheck>
          <ToolCheck htmlFor="scale" $width={35}>
            倍率%
          </ToolCheck>
          <NumberField id="scale" $width={28} defaultValue="100" />
          <Spinner />
        </ToolGroup>
        <ToolGroup>
          <Option>
            <Radio name="diagram" defaultChecked />
            T
          </Option>
        </ToolGroup>
      </ToolBar>

      <Body>
        <SideBar>
          <Tabs $left={2}>
            <Tab $active $height={21}>
              <Icon name="edit" />
              入力データ編集
            </Tab>
            <Tab $height={20}>
              <Icon name="result" />
              結果確認
            </Tab>
          </Tabs>
          <SidePage>
            <TreeFrame>
              <TreeColumn>
                <Tree>
                  {NODES.map(([depth, name], i) => (
                    <TreeNode key={i} index={i} depth={depth} name={name} />
                  ))}
                </Tree>
                <ScrollBar across size={137} after={18} />
              </TreeColumn>
              <BarColumn>
                <ScrollBar size={462} after={70} />
              </BarColumn>
            </TreeFrame>
          </SidePage>
        </SideBar>

        <Main>
          <Strip>
            <StripHandle />
          </Strip>
          <Heading>曲げ・軸力照査</Heading>
          <Actions>
            <ActionButton aria-label="Refresh">
              <Icon name="refresh" />
            </ActionButton>
            <ActionButton aria-label="Help">
              <Icon name="help" />
            </ActionButton>
          </Actions>
          <ScrollRow>
            <Sheet>
              <Tabs>
                <Tab $height={18}>曲げ照査</Tab>
                <Tab $height={18} $flat>
                  曲げひび割れ幅、有効幅関連
                </Tab>
                <Tab $height={18} $active>
                  曲げ破壊、Ｍ－φ
                </Tab>
              </Tabs>
              <Page>
                <Row>
                  <RowLabel $off>終局時の検討断面</RowLabel>
                  <Choice group="section" col={2} off>
                    M用
                  </Choice>
                  <Choice group="section" col={3} off on>
                    N用(全断面有効)
                  </Choice>
                </Row>
                <Row>
                  <RowLabel>破壊抵抗曲げモーメントの算出法</RowLabel>
                  <Choice group="moment" col={2} on>
                    N：一定
                  </Choice>
                  <Choice group="moment" col={3}>
                    M/N：一定
                  </Choice>
                </Row>
                <Row>
                  <RowLabel>破壊抵抗曲げモーメントの低減</RowLabel>
                  <Option $col={2}>
                    <Check />
                    <OptionText>考慮する</OptionText>
                  </Option>
                  <Cell $gap={6}>
                    <NumberField id="reduce" $width={58} defaultValue="70.0" />
                    <label htmlFor="reduce">%</label>
                  </Cell>
                </Row>
                <Row $bottom={1}>
                  <RowLabel>M-φ曲線計算用軸力</RowLabel>
                  <Choice group="axial" col={2}>
                    死荷重時
                  </Choice>
                  <Choice group="axial" col={2} on>
                    全死荷重時
                  </Choice>
                  <Choice group="axial" col={2}>
                    地震時
                  </Choice>
                </Row>
                <Row>
                  <RowLabel $off>M-φ曲線計算用軸力に</RowLabel>
                  <Option $col={2} $off>
                    <Check disabled />
                    <OptionText>鉄筋拘束力を考慮する</OptionText>
                  </Option>
                </Row>
                <Row>
                  <RowLabel>上部工のMu、M-φ算出時の主鉄筋の考慮</RowLabel>
                  <Choice group="rebar" col={2} on>
                    する
                  </Choice>
                  <Choice group="rebar" col={3}>
                    しない
                  </Choice>
                </Row>
                <Row>
                  <RowLabel>Mu算出時に後打ち部</RowLabel>
                  <Choice group="post" col={2}>
                    考慮する
                  </Choice>
                  <Choice group="post" col={3} on>
                    考慮しない
                  </Choice>
                </Row>
                <Row>
                  <RowLabel>上部工のＭ－φ曲線準拠基準</RowLabel>
                  <Choice group="standard" col={2} on>
                    道示Ⅲ
                  </Choice>
                  <Choice group="standard" col={3}>
                    道示Ⅴ(PC降伏)
                  </Choice>
                  <Choice group="standard" col={4}>
                    道示Ⅴ(PC、鉄筋降伏)
                  </Choice>
                </Row>
                <Row $gap={4}>
                  <RowLabel>MyO算出時のεsy発生位置</RowLabel>
                  <Choice group="yield" col={2}>
                    配筋から(最外縁)
                  </Choice>
                  <Choice group="yield" col={3}>
                    配筋から(⊿だけ内側)
                  </Choice>
                  <Choice group="yield" col={4} on>
                    旧版互換(Ver7.00.01まで)
                  </Choice>
                  <Cell $gap={9}>
                    <NumberField id="depth" $width={66} defaultValue="0.100" />
                    <label htmlFor="depth">m</label>
                    <OptionText>(引張縁から)</OptionText>
                  </Cell>
                </Row>
                <Row>
                  <RowLabel>Mc算出時断面諸量の取り扱い</RowLabel>
                  <Choice group="area" col={2} on>
                    A=Ac+As・n
                  </Choice>
                  <Choice group="area" col={3}>
                    A=Ac+As・(n-1)
                  </Choice>
                  <Underline />
                </Row>
                <Row>
                  <RowLabel>M-φ曲線の計算で初期断面力状態を</RowLabel>
                  <Choice group="initial" col={2} on>
                    表示する
                  </Choice>
                  <Choice group="initial" col={3}>
                    表示しない
                  </Choice>
                </Row>
                <Row $bottom={21}>
                  <RowLabel $wide>Mu、My0計算時：　部材の変形に伴う外ケーブルの張力増加</RowLabel>
                  <Choice group="cable" col={2} on>
                    一定値(材料データ)
                  </Choice>
                  <Choice group="cable" col={2}>
                    JH設計要領準拠(各ケーブルごとに計算)
                  </Choice>
                  <SubBox>
                    <SubLabel>分　類：</SubLabel>
                    <Choice group="kind" off on>
                      ラーメン構造
                    </Choice>
                    <Choice group="kind" off>
                      連続構造
                    </Choice>
                  </SubBox>
                </Row>
                <Row>
                  <RowLabel $off>鉄筋拘束力を終局時a),b),c)に</RowLabel>
                  <Choice group="restraint" col={2} off on>
                    考慮する
                  </Choice>
                  <Choice group="restraint" col={3} off>
                    考慮しない
                  </Choice>
                </Row>
                <Row>
                  <RowLabel>雪荷重を終局時a),b),c)に</RowLabel>
                  <Choice group="snow" col={2} on>
                    考慮する
                  </Choice>
                  <Choice group="snow" col={3}>
                    考慮しない
                  </Choice>
                </Row>
              </Page>
            </Sheet>
            <ScrollBar before={21} size={348} after={141} />
          </ScrollRow>
        </Main>
      </Body>

      <Dock>
        <DockPanel>
          <Tabs>
            <Tab $height={18} $flat>
              データチェック
            </Tab>
            <Tab $height={18} $active>
              計算状況
            </Tab>
            <Tab $height={18}>Frame3Dエクスポート</Tab>
          </Tabs>
          <DockPage>
            <DockFrame>
              <ScrollBar across size={686} after={312} />
            </DockFrame>
          </DockPage>
        </DockPanel>
      </Dock>

      <StatusBar>
        <StatusCell $width={100}>W:1082, H:804</StatusCell>
        <StatusCell $width={299} />
        <StatusCell>
          <span />
          <Svg viewBox="0 0 16 16">
            <path d="M15 4L4 15M15 8L8 15M15 12L12 15" stroke={shade} strokeWidth="1.600" />
            <path d="M16 5L6 15M16 9L10 15M16 13L14 15" stroke="#fff" strokeWidth="0.600" />
          </Svg>
        </StatusCell>
      </StatusBar>
    </Window>
  </>
);

export default App;
